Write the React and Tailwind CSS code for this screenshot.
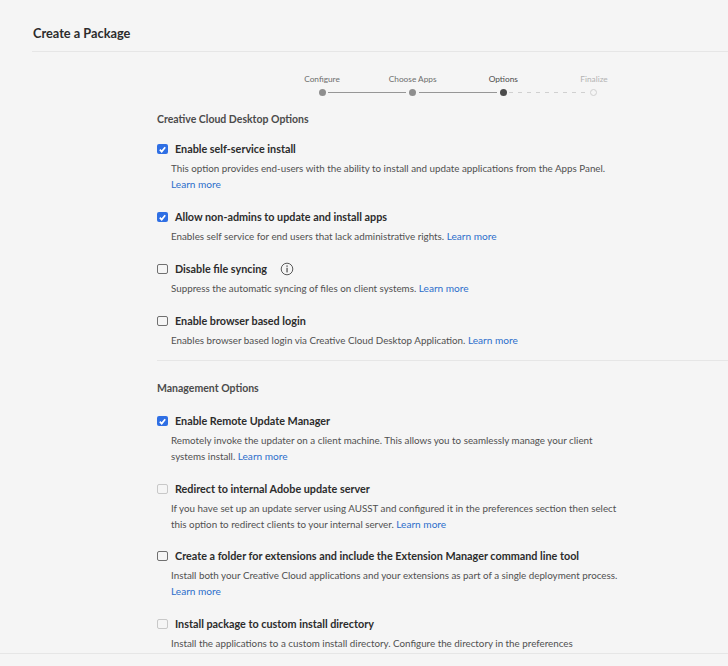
import React from "react";

const LM = () => <a className="text-[10.1px] text-[#2c6ecb]">Learn more</a>;

function Check({ state }) {
  if (state === "on")
    return (
      <span className="w-[10.5px] h-[10.5px] rounded-[2px] bg-[#2f6fe4] flex items-center justify-center shrink-0">
        <svg width="9" height="9" viewBox="0 0 9 9" fill="none">
          <path d="M1.8 4.6 L3.7 6.6 L7.2 2.2" stroke="#fff" strokeWidth="1.7" />
        </svg>
      </span>
    );
  return (
    <span
      className={`w-[10.5px] h-[10.5px] rounded-[2px] border-[1.5px] shrink-0 ${
        state === "dim" ? "border-[#c8c8c8]" : "border-[#707070]"
      }`}
    />
  );
}

function Option({ state, label, info, children, tight }) {
  return (
    <div className={tight ? "mb-[14px]" : "mb-[15px]"}>
      <div className="flex items-center h-5">
        <Check state={state} />
        <span className="ml-[7.5px] text-[10.8px] font-bold text-[#2c2c2c] whitespace-nowrap">{label}</span>
        {info && (
          <svg className="ml-[13px]" width="14" height="14" viewBox="0 0 14 14" fill="none">
            <circle cx="7" cy="7" r="5.8" stroke="#5a5a5a" strokeWidth="1" />
            <rect x="6.4" y="3.4" width="1.3" height="1.4" fill="#5a5a5a" />
            <rect x="6.4" y="5.8" width="1.3" height="4.6" fill="#5a5a5a" />
          </svg>
        )}
      </div>
      <div className="ml-[14px] pt-px text-[9.8px] leading-4 text-[#505050]">{children}</div>
    </div>
  );
}

function Step({ label, cls, dot }) {
  return (
    <div className="w-0 flex flex-col items-center">
      <span className={`text-[8.3px] leading-3 whitespace-nowrap ${cls}`}>{label}</span>
      <span className={`mt-[4px] w-[7px] h-[7px] rounded-full shrink-0 ${dot}`} />
    </div>
  );
}

export default function App() {
  return (
    <div
      className="h-[666px] w-[728px] overflow-hidden bg-[#f5f5f5] flex flex-col"
      style={{ fontFamily: 'Lato, "Open Sans", sans-serif' }}
    >
      <div className="h-[653px] overflow-hidden">
        <div className="ml-8 h-[52px] border-b border-[#e6e6e6] pt-6">
          <h1 className="ml-px text-[12.75px] leading-[18px] font-bold text-[#2c2c2c]">Create a Package</h1>
        </div>

        <div className="relative h-[45px] ml-[322px] w-[272px] pt-[21px]">
          <div className="flex justify-between">
            <Step label="Configure" cls="text-[#6e6e6e]" dot="bg-[#8e8e8e]" />
            <Step label="Choose Apps" cls="text-[#6e6e6e]" dot="bg-[#8e8e8e]" />
            <Step label="Options" cls="text-[#4b4b4b]" dot="bg-[#4b4b4b]" />
            <Step label="Finalize" cls="text-[#b3b3b3]" dot="bg-transparent border border-[#d0d0d0]" />
          </div>
          <div className="absolute left-[6px] w-[78px] top-[40px] h-[1px] bg-[#969696]" />
          <div className="absolute left-[97px] w-[78px] top-[40px] h-[1px] bg-[#969696]" />
          <div className="absolute left-[187px] w-[78px] top-[40px] h-[1px] bg-[repeating-linear-gradient(90deg,#d0d0d0_0_4px,transparent_4px_9px)]" />
        </div>

        <div className="ml-[157px] mt-[14px]">
          <h2 className="text-[10.5px] leading-4 font-bold text-[#4b4b4b] mb-3">Creative Cloud Desktop Options</h2>
          <Option state="on" label="Enable self-service install">
            This option provides end-users with the ability to install and update applications from the Apps Panel.
            <br />
            <LM />
          </Option>
          <Option state="on" label="Allow non-admins to update and install apps">
            Enables self service for end users that lack administrative rights. <LM />
          </Option>
          <Option state="off" label="Disable file syncing" info>
            Suppress the automatic syncing of files on client systems. <LM />
          </Option>
          <Option state="off" label="Enable browser based login">
            Enables browser based login via Creative Cloud Desktop Application. <LM />
          </Option>

          <div className="border-t border-[#e6e6e6] -mt-[3px] mb-[19px]" />

          <h2 className="text-[10.5px] leading-4 font-bold text-[#4b4b4b] mb-[15px]">Management Options</h2>
          <Option state="on" label="Enable Remote Update Manager">
            Remotely invoke the updater on a client machine. This allows you to seamlessly manage your client
            <br />
            systems install. <LM />
          </Option>
          <Option tight state="dim" label="Redirect to internal Adobe update server">
            If you have set up an update server using AUSST and configured it in the preferences section then select
            <br />
            this option to redirect clients to your internal server. <LM />
          </Option>
          <Option state="off" label="Create a folder for extensions and include the Extension Manager command line tool">
            Install both your Creative Cloud applications and your extensions as part of a single deployment process.
            <br />
            <LM />
          </Option>
          <Option state="dim" label="Install package to custom install directory">
            Install the applications to a custom install directory. Configure the directory in the preferences
          </Option>
        </div>
      </div>
      <div className="flex-1 border-t border-[#e6e6e6]" />
    </div>
  );
}
